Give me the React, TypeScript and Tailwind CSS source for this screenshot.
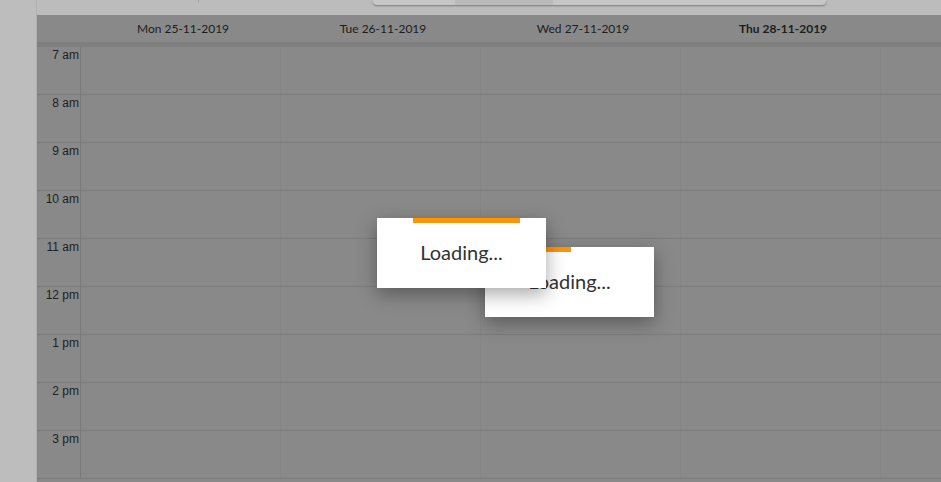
import React from 'react';

const days = [
  { label: 'Mon 25-11-2019', today: false },
  { label: 'Tue 26-11-2019', today: false },
  { label: 'Wed 27-11-2019', today: false },
  { label: 'Thu 28-11-2019', today: true },
];

const hours = ['7 am', '8 am', '9 am', '10 am', '11 am', '12 pm', '1 pm', '2 pm', '3 pm'];

function LoadingBox({ barClass }: { barClass: string }) {
  return (
    <div className="relative flex h-[70px] w-[169px] items-center justify-center bg-white shadow-[0_6px_18px_rgba(0,0,0,0.35)]">
      <div className={`absolute top-0 h-[5px] bg-[#ff9500] ${barClass}`} />
      <span className="pb-[3px] font-['Lato',sans-serif] text-[20px] leading-[24px] text-[#333]">Loading...</span>
    </div>
  );
}

export default function App() {
  return (
    <div className="relative flex h-[482px] w-[941px] overflow-hidden bg-[#bcbcbc]">
      {/* side strip */}
      <div className="w-[37px] shrink-0 border-r border-[#b0b0b0] bg-[#bdbdbd]" />

      <div className="flex min-w-0 flex-1 flex-col">
        {/* toolbar remains */}
        <div className="relative h-[15px] shrink-0">
          <div className="absolute left-[161px] top-0 h-[3px] w-px bg-[#a9a9a9]" />
          <div className="absolute left-[336px] top-0 flex h-[5px] w-[453px] overflow-hidden rounded-b-[4px] bg-[#c6c6c6] shadow-[0_1px_2px_rgba(0,0,0,0.35)]">
            <div className="w-[82px]" />
            <div className="w-[98px] bg-[#bababa]" />
          </div>
        </div>

        {/* header */}
        <div className="flex h-[27px] shrink-0 items-center bg-[#898989] font-['Lato',sans-serif] text-[12px] text-[#1d1d1d]">
          <div className="w-[44px] shrink-0" />
          {days.map((d) => (
            <div
              key={d.label}
              className={`w-[200px] shrink-0 pl-[4px] text-center ${d.today ? 'font-bold' : ''}`}
            >
              {d.label}
            </div>
          ))}
        </div>
        <div className="h-[5px] shrink-0 bg-[#7f7f7f]" />

        {/* grid */}
        <div className="flex-1 bg-[#898989]">
          {hours.map((h) => (
            <div key={h} className="flex h-[48px] border-b border-[#7b7b7b]">
              <div className="w-[44px] shrink-0 border-r border-[#7a7a7a] pr-[1px] pt-[1px] text-right font-['Liberation_Sans',Arial,sans-serif] text-[12px] leading-[14px] text-[#1f1f1f]">
                {h}
              </div>
              {[0, 1, 2, 3, 4].map((i) => (
                <div key={i} className="w-[200px] shrink-0 border-r border-[#858585]" />
              ))}
            </div>
          ))}
        </div>
      </div>

      {/* loading popups */}
      <div className="absolute left-[485px] top-[247px]">
        <LoadingBox barClass="left-[36px] w-[50px]" />
      </div>
      <div className="absolute left-[377px] top-[218px]">
        <LoadingBox barClass="left-[36px] w-[107px]" />
      </div>
    </div>
  );
}
